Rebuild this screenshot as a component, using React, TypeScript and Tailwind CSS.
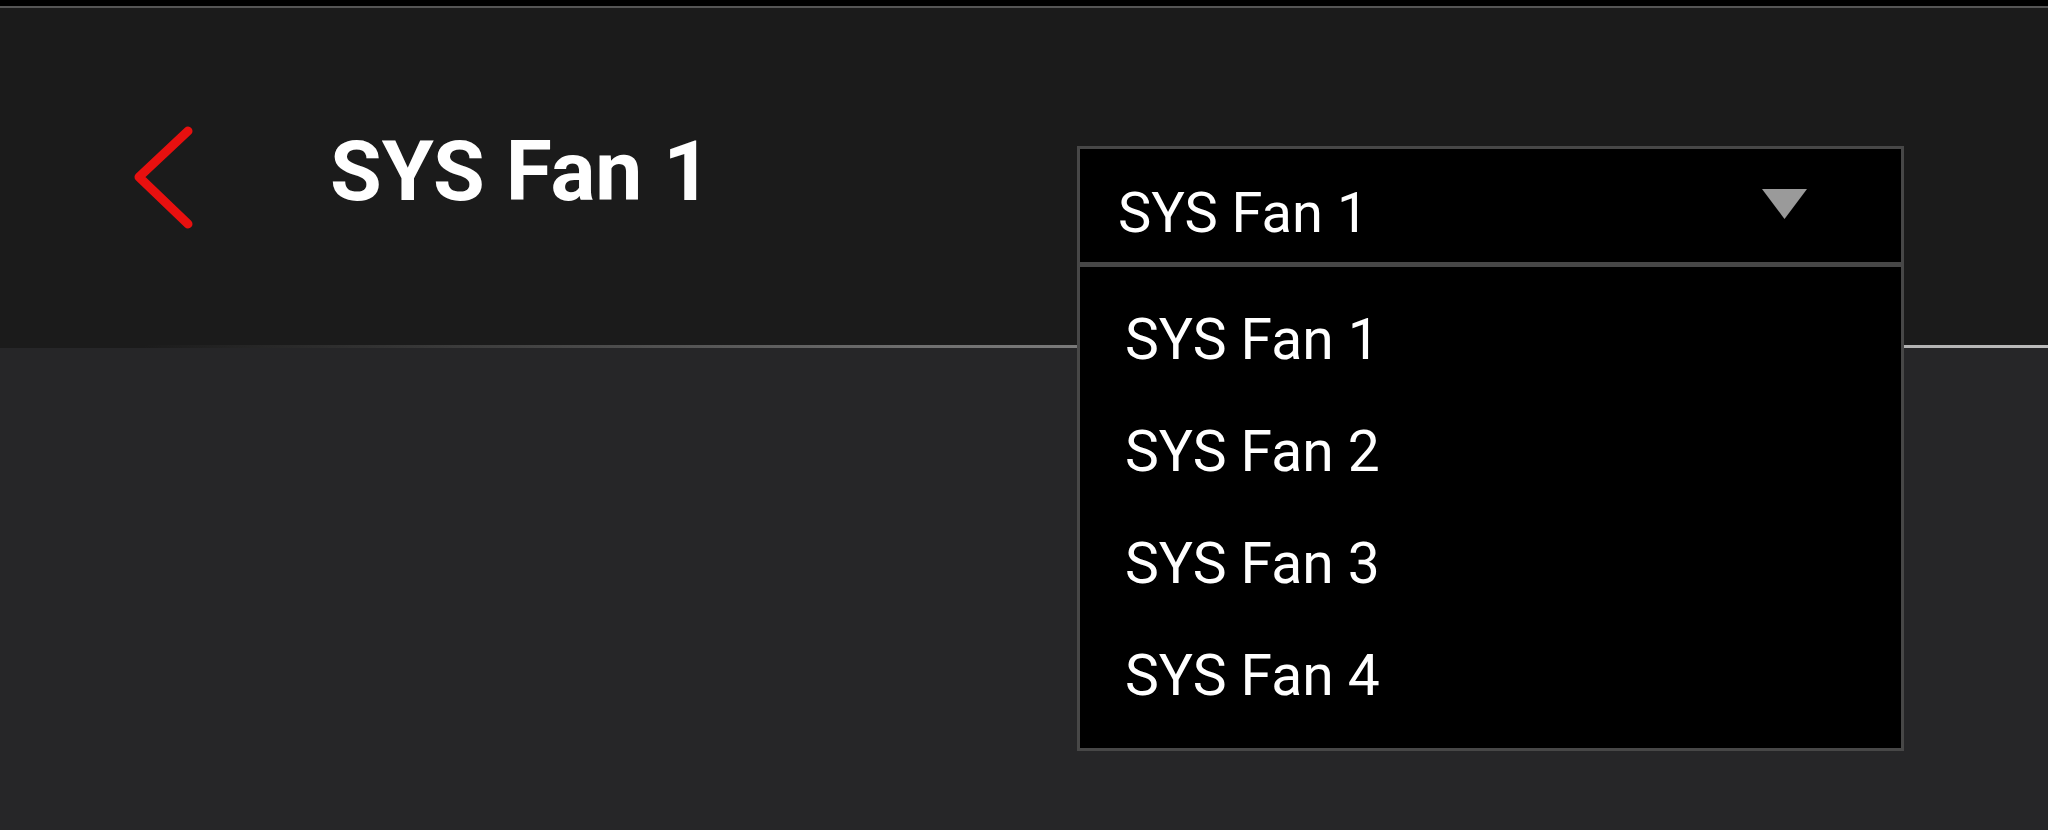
import React, { useState } from 'react';

const fans = ['SYS Fan 1', 'SYS Fan 2', 'SYS Fan 3', 'SYS Fan 4'];

const BackChevron = () => (
  <svg width="60" height="104" viewBox="0 0 60 104" className="shrink-0">
    <polyline
      points="55,5 6,51 55,98"
      fill="none"
      stroke="#e8100f"
      strokeWidth="9"
      strokeLinecap="round"
      strokeLinejoin="round"
    />
  </svg>
);

const FanSelect = () => {
  const [selected, setSelected] = useState(fans[0]);
  const [open, setOpen] = useState(true);

  return (
    <div className="relative ml-auto mr-[144px] mt-[138px] w-[827px]">
      {/* Trigger */}
      <button
        onClick={() => setOpen(!open)}
        className="flex h-[121px] w-full items-start justify-between border-[3px] border-b-[5px] border-[#474747] bg-black pl-[38px] pr-[94px] pt-[36px] text-left"
      >
        <span className="text-[56px] leading-none text-white">{selected}</span>
        <svg width="45" height="30" viewBox="0 0 45 30" className="mt-[4px]">
          <polygon points="0,0 45,0 22.5,30" fill="#9a9a9a" />
        </svg>
      </button>

      {/* Options */}
      {open && (
        <div className="absolute left-0 top-full w-full border-x-[3px] border-b-[3px] border-[#474747] bg-black pb-[17px] pt-[16px]">
          {fans.map((fan) => (
            <div
              key={fan}
              onClick={() => {
                setSelected(fan);
                setOpen(false);
              }}
              className="flex h-[112px] cursor-pointer items-center pl-[45px] text-[57px] leading-none text-white"
            >
              {fan}
            </div>
          ))}
        </div>
      )}
    </div>
  );
};

export default function App() {
  return (
    <div
      className="flex h-[830px] w-full flex-col overflow-hidden bg-[#262628]"
      style={{ fontFamily: 'Roboto, "Liberation Sans", sans-serif' }}
    >
      <div className="h-[6px] bg-black" />
      <div className="h-[2px] bg-[#555555]" />

      {/* Header */}
      <header className="flex h-[337px] items-start bg-[#1b1b1b] pl-[133px]">
        <div className="mt-[118px]">
          <BackChevron />
        </div>
        <h1 className="ml-[137px] mt-[122px] text-[84px] font-bold leading-none text-white">SYS Fan 1</h1>
        <FanSelect />
      </header>
      <div className="h-[3px] bg-linear-to-r from-[#1b1b1b] from-[7%] via-[#707070] via-[45%] to-[#bcbcbc]" />

      <main className="flex-1" />
    </div>
  );
}
